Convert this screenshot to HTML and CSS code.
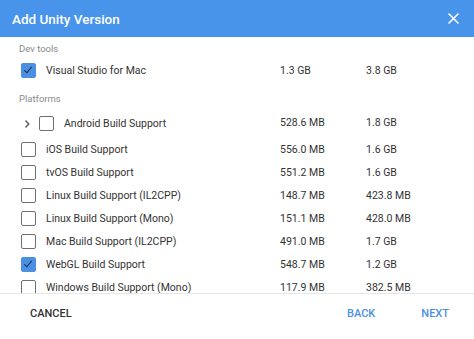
FILE: index.html
```html
<!DOCTYPE html>
<html lang="en">

<head>
    <meta charset="UTF-8">
    <meta name="viewport" content="width=device-width, initial-scale=1.0">
    <title>Add Unity Version</title>
    <link rel="stylesheet" href="styles.css">
</head>

<body>
    <div class="dialog">
        <header class="dialog-header">
            <h1>Add Unity Version</h1>
            <svg class="close" width="11" height="11" viewBox="0 0 11 11">
                <path d="M1 1L10 10M10 1L1 10" stroke="#fff" stroke-width="1.6" stroke-linecap="round" />
            </svg>
        </header>

        <div class="dialog-body">
            <div class="section-label">Dev tools</div>
            <div class="row">
                <span class="name"><span class="box checked"></span>Visual Studio for Mac</span>
                <span class="size">1.3 GB</span>
                <span class="size">3.8 GB</span>
            </div>

            <div class="section-label spaced">Platforms</div>
            <div class="row tall">
                <span class="name">
                    <svg class="chevron" width="8" height="10" viewBox="0 0 8 10">
                        <path d="M2.5 1.5L5.8 5L2.5 8.5" fill="none" stroke="#555" stroke-width="1.3" />
                    </svg>
                    <span class="box"></span>Android Build Support
                </span>
                <span class="size up">528.6 MB</span>
                <span class="size up">1.8 GB</span>
            </div>
            <div class="row">
                <span class="name"><span class="box"></span>iOS Build Support</span>
                <span class="size">556.0 MB</span>
                <span class="size">1.6 GB</span>
            </div>
            <div class="row">
                <span class="name"><span class="box"></span>tvOS Build Support</span>
                <span class="size">551.2 MB</span>
                <span class="size">1.6 GB</span>
            </div>
            <div class="row">
                <span class="name"><span class="box"></span>Linux Build Support (IL2CPP)</span>
                <span class="size">148.7 MB</span>
                <span class="size">423.8 MB</span>
            </div>
            <div class="row">
                <span class="name"><span class="box"></span>Linux Build Support (Mono)</span>
                <span class="size">151.1 MB</span>
                <span class="size">428.0 MB</span>
            </div>
            <div class="row">
                <span class="name"><span class="box"></span>Mac Build Support (IL2CPP)</span>
                <span class="size">491.0 MB</span>
                <span class="size">1.7 GB</span>
            </div>
            <div class="row">
                <span class="name"><span class="box checked"></span>WebGL Build Support</span>
                <span class="size">548.7 MB</span>
                <span class="size">1.2 GB</span>
            </div>
            <div class="row">
                <span class="name"><span class="box"></span>Windows Build Support (Mono)</span>
                <span class="size">117.9 MB</span>
                <span class="size">382.5 MB</span>
            </div>
        </div>

        <footer class="dialog-footer">
            <button class="btn">CANCEL</button>
            <span class="spacer"></span>
            <button class="btn primary">BACK</button>
            <button class="btn primary">NEXT</button>
        </footer>
    </div>
</body>

</html>
```

FILE: styles.css
```css
body {
    margin: 0;
    font-family: Roboto, "Liberation Sans", Arial, sans-serif;
    background: #fff;
    color: #333;
}

.dialog {
    width: 474px;
    height: 339px;
    display: flex;
    flex-direction: column;
    overflow: hidden;
}

.dialog-header {
    height: 37px;
    flex-shrink: 0;
    background: #4894ea;
    display: flex;
    align-items: center;
    padding: 0 15px 0 12px;
    box-sizing: border-box;
}

.dialog-header h1 {
    flex: 1;
    margin: 0;
    font-size: 13.5px;
    font-weight: 500;
    color: #fff;
}

.dialog-body {
    height: 256px;
    flex-shrink: 0;
    overflow: hidden;
}

.section-label {
    height: 22px;
    line-height: 23px;
    padding-left: 19px;
    font-size: 9.5px;
    color: #8a8a8a;
}

.section-label.spaced {
    margin-top: 5px;
}

.row {
    height: 23px;
    display: grid;
    grid-template-columns: 259px 86px 1fr;
    align-items: center;
    padding-left: 21px;
    font-size: 10.5px;
    color: #333;
}

.row.tall {
    height: 29px;
}

.name {
    display: flex;
    align-items: center;
}

.chevron {
    margin: 0 8px 0 2px;
}

.box {
    width: 13px;
    height: 13px;
    border: 1px solid #6f6f6f;
    border-radius: 2px;
    margin-right: 10px;
    flex-shrink: 0;
    position: relative;
}

.box.checked {
    background: #4a90e2;
    border-color: #4a90e2;
}

.box.checked::after {
    content: "";
    position: absolute;
    left: 4px;
    top: 1px;
    width: 3px;
    height: 7px;
    border: solid #1d2a44;
    border-width: 0 1.6px 1.6px 0;
    transform: rotate(40deg);
}

.size.up {
    margin-top: -3px;
}

.dialog-footer {
    flex: 1;
    border-top: 1px solid #e6e6e6;
    display: flex;
    align-items: flex-start;
    padding: 13px 15px 0 20px;
}

.spacer {
    flex: 1;
}

.btn {
    background: none;
    border: none;
    padding: 0 10px;
    font-family: inherit;
    font-size: 11px;
    font-weight: 500;
    color: #333;
}

.btn.primary {
    color: #4a90e2;
    margin-left: 26px;
}
```
